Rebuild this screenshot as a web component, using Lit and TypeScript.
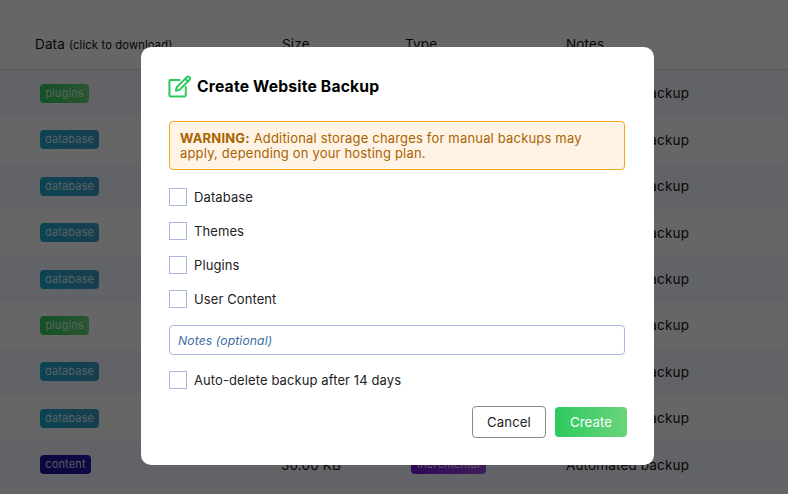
import { LitElement, html, css } from "lit";
import { customElement } from "lit/decorators.js";

type Row = [string, string, string, string, string];
const rows: Row[] = [
  ["plugins", "plugins", "1.20 MB", "Incremental", "Automated backup"],
  ["database", "database", "12.50 MB", "Incremental", "Automated backup"],
  ["database", "database", "12.48 MB", "Incremental", "Automated backup"],
  ["database", "database", "12.46 MB", "Incremental", "Automated backup"],
  ["database", "database", "12.44 MB", "Incremental", "Automated backup"],
  ["plugins", "plugins", "1.20 MB", "Incremental", "Automated backup"],
  ["database", "database", "12.40 MB", "Incremental", "Automated backup"],
  ["database", "database", "12.38 MB", "Incremental", "Automated backup"],
  ["content", "content", "30.00 KB", "Incremental", "Automated backup"],
];

@customElement("app-root")
export class AppRoot extends LitElement {
  static styles = css`
    :host {
      display: block;
      position: relative;
      width: 788px;
      height: 494px;
      overflow: hidden;
      background: #fff;
      font-family: "Inter", "Noto Sans", sans-serif;
      color: #111;
    }
    .table {
      padding-top: 27px;
      font-size: 13.5px;
      letter-spacing: 0.15px;
    }
    .row {
      display: grid;
      align-items: center;
      height: 46.4px;
      box-sizing: border-box;
    }
    .head {
      grid-template-columns: 247px 123px 161px 1fr;
      height: 43.3px;
      padding: 0 0 9px 35px;
      border-bottom: 1px solid #ddd;
    }
    .head small { font-size: 11.2px; }
    .body .row:nth-child(odd) { background: #f6f8ff; }
    .body .row { padding-left: 40px; grid-template-columns: 241px 130px 155px 1fr; }
    .pill {
      display: inline-block;
      justify-self: start;
      height: 19px;
      line-height: 18px;
      padding: 0 5px;
      border-radius: 4px;
      font-size: 11px;
      color: rgba(255, 255, 255, 0.85);
      text-align: center;
    }
    .plugins { background: linear-gradient(90deg, #2dc95f, #6bd47b); width: 39px; }
    .database { background: linear-gradient(90deg, #1ea9cf, #3d9bc7); width: 49px; }
    .content { background: linear-gradient(90deg, #1b0f9e, #2418a8); width: 41px; }
    .Incremental { background: linear-gradient(90deg, #7a10d6, #9a4fe0); width: 65px; }
    .backdrop {
      position: absolute;
      inset: 0;
      background: rgba(0, 0, 0, 0.6);
    }
    .modal {
      position: absolute;
      left: 141px;
      top: 47px;
      width: 513px;
      height: 418px;
      box-sizing: border-box;
      padding: 27px 29px 0 28px;
      background: #fff;
      border-radius: 10px;
      font-size: 13px;
      letter-spacing: 0.1px;
      color: #222;
    }
    .title {
      display: flex;
      align-items: center;
      gap: 5px;
      height: 24px;
      margin: 0 0 0 -1px;
      font-size: 15.7px;
      font-weight: 700;
      letter-spacing: 0.17px;
      color: #000;
    }
    .warn {
      box-sizing: border-box;
      margin-top: 23px;
      height: 49px;
      padding: 9px 10px 0;
      border: 1px solid #f5a623;
      border-radius: 4px;
      background: #fff3e6;
      color: #a86400;
      font-size: 13px;
      line-height: 15px;
      letter-spacing: 0.18px;
    }
    .warn b { font-weight: 700; }
    .checks { display: flex; flex-direction: column; gap: 16px; margin-top: 18px; }
    .check { display: flex; align-items: center; gap: 7px; height: 18px; }
    .box {
      width: 16px;
      height: 16px;
      border: 1px solid #a9b6de;
      background: #fff;
      flex: none;
    }
    .notes {
      box-sizing: border-box;
      display: flex;
      align-items: center;
      height: 30px;
      margin: 17px 0 16px;
      padding: 0 8px;
      border: 1px solid #a9b6de;
      border-radius: 4px;
      font-style: italic;
      color: #3e6ea3;
      font-size: 12.2px;
    }
    .actions { display: flex; justify-content: flex-end; gap: 9px; margin: 17px -2px 0 0; }
    .btn {
      box-sizing: border-box;
      display: flex;
      align-items: center;
      justify-content: center;
      height: 32px;
      border-radius: 4px;
      font-size: 13.2px;
    }
    .cancel { width: 74px; border: 1px solid #8a8a8a; color: #222; }
    .create { width: 72px; height: 30px; margin-top: 1px; background: linear-gradient(90deg, #2dc95f, #6bd47b); color: #fff; }
    .icon { flex: none; }
  `;

  render() {
    return html`
      <div class="table">
        <div class="row head">
          <div>Data <small>(click to download)</small></div>
          <div>Size</div>
          <div>Type</div>
          <div>Notes</div>
        </div>
        <div class="body">
          ${rows.map(
            (r) => html`<div class="row">
              <span class="pill ${r[0]}">${r[1]}</span>
              <span>${r[2]}</span>
              <span class="pill ${r[3]}">${r[3]}</span>
              <span>${r[4]}</span>
            </div>`
          )}
        </div>
      </div>
      <div class="backdrop"></div>
      <div class="modal">
        <h2 class="title">
          <svg class="icon" width="24" height="24" viewBox="0 0 24 24" fill="none" stroke="#2dc95f" stroke-width="2" stroke-linecap="round" stroke-linejoin="round">
            <path d="M11.5 6H2.6a1.2 1.2 0 0 0-1.2 1.2v14a1.2 1.2 0 0 0 1.2 1.2h14a1.2 1.2 0 0 0 1.2-1.2V13" />
            <path d="M8.8 13.2 18.9 3.1a1.9 1.9 0 0 1 2.7 0 1.9 1.9 0 0 1 0 2.7L11.5 15.9l-3.6.9z" />
            <path d="m17.2 4.8 2.7 2.7" />
          </svg>
          Create Website Backup
        </h2>
        <div class="warn"><b>WARNING:</b> Additional storage charges for manual backups may apply, depending on your hosting plan.</div>
        <div class="checks">
          ${["Database", "Themes", "Plugins", "User Content"].map(
            (t) => html`<div class="check"><span class="box"></span>${t}</div>`
          )}
        </div>
        <div class="notes">Notes (optional)</div>
        <div class="check"><span class="box"></span>Auto-delete backup after 14 days</div>
        <div class="actions">
          <div class="btn cancel">Cancel</div>
          <div class="btn create">Create</div>
        </div>
      </div>
    `;
  }
}
